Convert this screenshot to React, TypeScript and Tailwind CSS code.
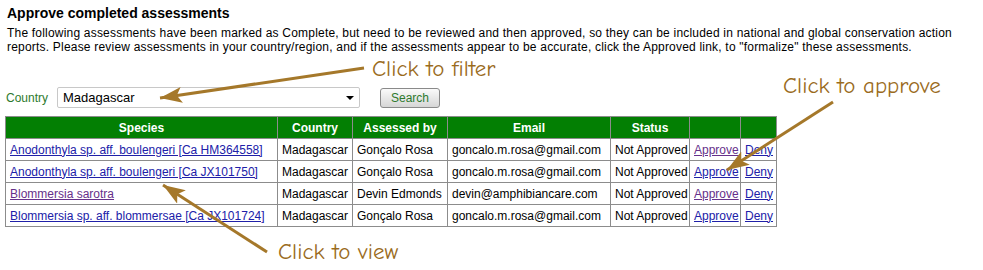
import React from "react";

type Row = {
  species: string;
  visited?: boolean;
  country: string;
  by: string;
  email: string;
  status: string;
  approveVisited?: boolean;
};

const rows: Row[] = [
  {
    species: "Anodonthyla sp. aff. boulengeri [Ca HM364558]",
    country: "Madagascar",
    by: "Gonçalo Rosa",
    email: "goncalo.m.rosa@gmail.com",
    status: "Not Approved",
    approveVisited: true,
  },
  {
    species: "Anodonthyla sp. aff. boulengeri [Ca JX101750]",
    country: "Madagascar",
    by: "Gonçalo Rosa",
    email: "goncalo.m.rosa@gmail.com",
    status: "Not Approved",
  },
  {
    species: "Blommersia sarotra",
    visited: true,
    country: "Madagascar",
    by: "Devin Edmonds",
    email: "devin@amphibiancare.com",
    status: "Not Approved",
    approveVisited: true,
  },
  {
    species: "Blommersia sp. aff. blommersae [Ca JX101724]",
    country: "Madagascar",
    by: "Gonçalo Rosa",
    email: "goncalo.m.rosa@gmail.com",
    status: "Not Approved",
  },
];

const cell = "border border-[#8c8c8c] px-[4px] h-[22px] whitespace-nowrap";
const link = "underline text-[#2020a8]";
const visitedLink = "underline text-[#66308a]";

function Arrows() {
  return (
    <svg
      className="absolute left-0 top-0 pointer-events-none"
      width={983}
      height={270}
      viewBox="0 0 983 270"
    >
      <defs>
        <marker
          id="head"
          markerUnits="userSpaceOnUse"
          markerWidth={24}
          markerHeight={18}
          refX={22}
          refY={8}
          orient="auto"
        >
          <path d="M0,0 L22,8 L0,16 L5,8 Z" fill="#a5782a" />
        </marker>
      </defs>
      <line x1={364} y1={68} x2={160} y2={98} stroke="#a5782a" strokeWidth={3} markerEnd="url(#head)" />
      <line x1={833} y1={102} x2={727} y2={170} stroke="#a5782a" strokeWidth={3} markerEnd="url(#head)" />
      <line x1={267} y1={252} x2={163} y2={185} stroke="#a5782a" strokeWidth={3} markerEnd="url(#head)" />
    </svg>
  );
}

export default function App() {
  const note =
    "absolute text-[23px] leading-none text-[#9a6b1c] whitespace-nowrap font-['Comic_Sans_MS','Comic_Neue','DejaVu_Sans',sans-serif]";

  return (
    <div className="relative w-[983px] h-[270px] overflow-hidden bg-white px-[5px] font-['Liberation_Sans',Arial,sans-serif] text-black">
      <h1 className="pl-[2px] pt-[4px] text-[14px] leading-[18px] font-bold">
        Approve completed assessments
      </h1>
      <p className="pl-[2px] mt-[4px] w-[955px] text-[12px] leading-[14px] tracking-[0.2px]">
        The following assessments have been marked as Complete, but need to be reviewed and then approved, so they can be
        included in national and global conservation action reports. Please review assessments in your country/region, and
        if the assessments appear to be accurate, click the Approved link, to "formalize" these assessments.
      </p>

      {/* Filter */}
      <div className="mt-[33px] flex items-center h-[21px]">
        <span className="pl-[1px] text-[12px] text-[#2d7a2d]">Country</span>
        <div className="ml-[9px] w-[303px] h-[21px] border border-[#c8c8c8] rounded-[2px] bg-white flex items-center justify-between pl-[5px] pr-[5px]">
          <span className="text-[13px]">Madagascar</span>
          <span className="w-0 h-0 border-l-[4px] border-r-[4px] border-t-[4px] border-l-transparent border-r-transparent border-t-black" />
        </div>
        <button className="ml-[20px] w-[60px] h-[20px] border border-[#8a8a8a] rounded-[3px] bg-gradient-to-b from-[#fafafa] to-[#d6d6d6] text-[12px] text-[#2d7a2d]">
          Search
        </button>
      </div>

      {/* Table */}
      <table className="mt-[8px] border-collapse table-fixed w-[771px] text-[12px]">
        <colgroup>
          <col className="w-[272px]" />
          <col className="w-[75px]" />
          <col className="w-[95px]" />
          <col className="w-[163px]" />
          <col className="w-[79px]" />
          <col className="w-[51px]" />
          <col className="w-[36px]" />
        </colgroup>
        <thead>
          <tr className="bg-[#037f03] text-white font-bold">
            <th className={`${cell} text-center`}>Species</th>
            <th className={`${cell} text-center`}>Country</th>
            <th className={`${cell} text-center`}>Assessed by</th>
            <th className={`${cell} text-center`}>Email</th>
            <th className={`${cell} text-center`}>Status</th>
            <th className={cell}></th>
            <th className={cell}></th>
          </tr>
        </thead>
        <tbody>
          {rows.map((r) => (
            <tr key={r.species}>
              <td className={cell}>
                <a className={r.visited ? visitedLink : link}>{r.species}</a>
              </td>
              <td className={cell}>{r.country}</td>
              <td className={cell}>{r.by}</td>
              <td className={cell}>{r.email}</td>
              <td className={cell}>{r.status}</td>
              <td className={cell}>
                <a className={r.approveVisited ? visitedLink : link}>Approve</a>
              </td>
              <td className={cell}>
                <a className={link}>Deny</a>
              </td>
            </tr>
          ))}
        </tbody>
      </table>

      <Arrows />
      <span className={`${note} left-[372px] top-[57px]`}>Click to filter</span>
      <span className={`${note} left-[783px] top-[74px]`}>Click to approve</span>
      <span className={`${note} left-[278px] top-[240px]`}>Click to view</span>
    </div>
  );
}
